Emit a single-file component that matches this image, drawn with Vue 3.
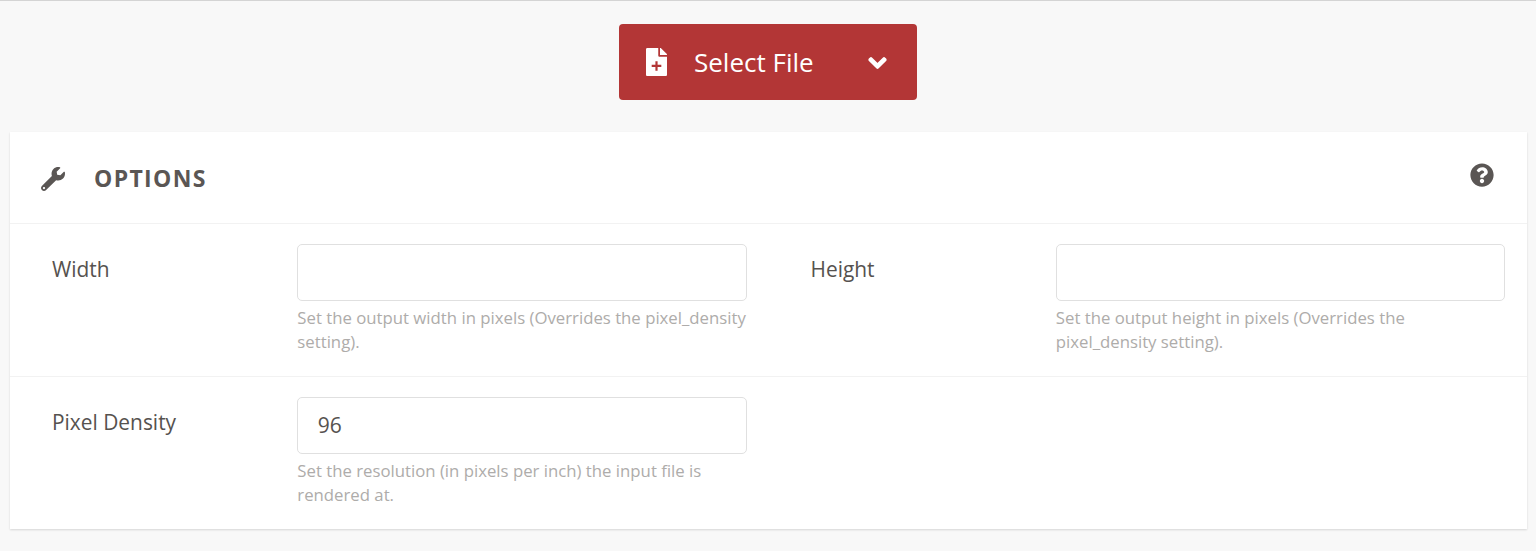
<template>
  <div class="page">
    <div class="upload">
      <button class="select-btn" type="button">
        <svg class="file-icon" viewBox="0 0 384 512">
          <path fill="#fff" d="M224 136V0H24C10.7 0 0 10.7 0 24v464c0 13.3 10.7 24 24 24h336c13.3 0 24-10.7 24-24V160H248c-13.2 0-24-10.8-24-24zm160-14.1v6.1H256V0h6.1c6.4 0 12.5 2.5 17 7l97.9 98c4.5 4.5 7 10.6 7 16.9z" />
          <path fill="#b33636" d="M172 240h40v68h68v40h-68v68h-40v-68h-68v-40h68z" />
        </svg>
        <span class="btn-label">Select File</span>
        <svg class="chevron" viewBox="0 0 448 512">
          <path fill="#fff" stroke="#fff" stroke-width="44" stroke-linejoin="round" d="M207.029 381.476L12.686 187.132c-9.373-9.373-9.373-24.569 0-33.941l22.667-22.667c9.357-9.357 24.522-9.375 33.901-.04L224 284.505l154.745-154.021c9.379-9.335 24.544-9.317 33.901.04l22.667 22.667c9.373 9.373 9.373 24.569 0 33.941L240.971 381.476c-9.373 9.372-24.569 9.372-33.942 0z" />
        </svg>
      </button>
    </div>

    <section class="panel">
      <header class="panel-head">
        <svg class="wrench" viewBox="0 0 512 512">
          <path fill="#5a5654" d="M507.73 109.1c-2.24-9.03-13.54-12.09-20.12-5.51l-74.36 74.36-67.88-11.31-11.31-67.88 74.36-74.36c6.62-6.62 3.43-17.9-5.66-20.16-47.38-11.74-99.55.91-136.58 37.93-39.64 39.64-50.55 97.1-34.05 147.2L18.74 402.76c-24.99 24.99-24.99 65.51 0 90.5 24.99 24.99 65.51 24.99 90.5 0l213.21-213.21c50.12 16.71 107.47 5.68 147.37-34.22 37.07-37.07 49.7-89.32 37.91-136.73zM64 472c-13.25 0-24-10.75-24-24 0-13.26 10.75-24 24-24s24 10.74 24 24c0 13.25-10.75 24-24 24z" />
        </svg>
        <h2 class="panel-title">OPTIONS</h2>
        <svg class="help" viewBox="0 0 512 512">
          <path fill="#5a5654" d="M504 256c0 136.997-111.043 248-248 248S8 392.997 8 256C8 119.083 119.043 8 256 8s248 111.083 248 248zM262.655 90c-54.497 0-89.255 22.957-116.549 63.758-3.536 5.286-2.353 12.415 2.715 16.258l34.699 26.31c5.205 3.947 12.621 3.008 16.665-2.122 17.864-22.658 30.113-35.797 57.303-35.797 20.429 0 45.698 13.148 45.698 32.958 0 14.976-12.363 22.667-32.534 33.976C247.128 238.528 216 254.941 216 296v4c0 6.627 5.373 12 12 12h56c6.627 0 12-5.373 12-12v-1.333c0-28.462 83.186-29.647 83.186-106.667 0-58.002-60.165-102-116.531-102zM256 338c-25.365 0-46 20.635-46 46 0 25.364 20.635 46 46 46s46-20.636 46-46c0-25.365-20.635-46-46-46z" />
        </svg>
      </header>

      <div v-for="(row, i) in rows" :key="i" class="row">
        <div v-for="opt in row" :key="opt.label" class="cell">
          <label class="opt-label">{{ opt.label }}</label>
          <div class="opt-field">
            <input class="opt-input" type="text" :value="opt.value" />
            <p class="opt-help">{{ opt.help }}</p>
          </div>
        </div>
      </div>
    </section>
  </div>
</template>

<script setup>
const rows = [
  [
    { label: 'Width', value: '', help: 'Set the output width in pixels (Overrides the pixel_density setting).' },
    { label: 'Height', value: '', help: 'Set the output height in pixels (Overrides the pixel_density setting).' }
  ],
  [
    { label: 'Pixel Density', value: '96', help: 'Set the resolution (in pixels per inch) the input file is rendered at.' }
  ]
]
</script>

<style>
html, body {
  margin: 0;
  background: #f8f8f8;
}
</style>

<style scoped>
.page {
  height: 551px;
  box-sizing: border-box;
  overflow: hidden;
  border-top: 1px solid #d4d4d4;
  background: #f8f8f8;
  font-family: "Open Sans", "Liberation Sans", sans-serif;
  color: #56524f;
}

.upload {
  display: flex;
  justify-content: center;
  padding-top: 23px;
}

.select-btn {
  display: flex;
  align-items: center;
  width: 298px;
  height: 76px;
  padding: 0 31px 0 27px;
  box-sizing: border-box;
  border: none;
  border-radius: 4px;
  background: #b33636;
  color: #fff;
  font-family: inherit;
  font-size: 26px;
}

.file-icon {
  width: 21px;
  height: 28px;
  flex: none;
}

.btn-label {
  margin-left: 27px;
  flex: 1;
  text-align: left;
}

.chevron {
  width: 17px;
  height: 20px;
  flex: none;
  overflow: visible;
  margin-top: 1px;
}

.panel {
  margin: 32px 9px 0 10px;
  background: #fff;
  box-shadow: 0 1px 2px rgba(0, 0, 0, 0.14);
}

.panel-head {
  display: flex;
  align-items: center;
  height: 91px;
  padding: 0 33px 0 31px;
  border-bottom: 1px solid #f2f2f2;
}

.wrench {
  width: 24px;
  height: 24px;
  flex: none;
  margin-top: 2px;
}

.panel-title {
  flex: 1;
  margin: 0 0 0 29px;
  font-size: 23px;
  font-weight: 700;
  letter-spacing: 1.35px;
  color: #5a5654;
}

.help {
  width: 24px;
  height: 24px;
  flex: none;
  margin-top: -6px;
}

.row {
  display: grid;
  grid-template-columns: 758.5px 758.5px;
  height: 153.4px;
  box-sizing: border-box;
  padding-top: 20px;
  border-bottom: 1px solid #f2f2f2;
}

.row:last-child {
  height: 151.6px;
  border-bottom: none;
}

.cell {
  display: grid;
  grid-template-columns: 245.3px 449.4px;
  padding-left: 42px;
}

.opt-label {
  font-size: 20.9px;
  line-height: 50px;
  color: #56524f;
}

.opt-input {
  display: block;
  width: 100%;
  height: 57px;
  padding: 0 19.5px 2px;
  box-sizing: border-box;
  border: 1px solid #e0e0e0;
  border-radius: 5px;
  background: #fff;
  color: #56524f;
  font-family: inherit;
  font-size: 21px;
  outline: none;
}

.opt-help {
  margin: 5px 0 0;
  font-size: 16.75px;
  line-height: 24px;
  color: #aeacaa;
}
</style>
